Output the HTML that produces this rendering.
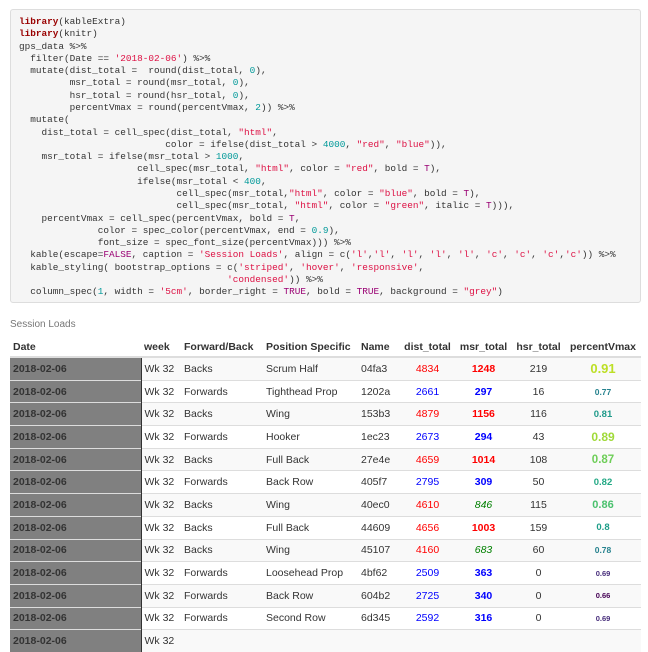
<!DOCTYPE html>
<html><head><style>
body{margin:0;background:#fff;width:648px;height:633px;overflow:hidden;font-family:"Liberation Sans",Arial,sans-serif;color:#333}
pre{position:absolute;left:10px;top:9px;width:613px;height:280px;margin:0;padding:6px 8px 6px 8px;background:#f5f5f5;border:1px solid #ddd;border-radius:3px;font-family:"Liberation Mono",monospace;font-size:9.4px;line-height:12.28px;color:#333}
.k{color:#990000;font-weight:bold}.s{color:#dd1144}.n{color:#009999}.t{color:#990073}
.cap{position:absolute;left:10px;top:319px;font-size:10px;color:#777}
table{position:absolute;left:10px;top:337px;width:631px;border-collapse:collapse;font-size:10.5px;table-layout:fixed}
th{text-align:left;font-weight:bold;height:19px;padding:0 3px;border-bottom:2px solid #ddd;color:#333}
td{height:21.7px;padding:0 3px;border-top:1px solid #ddd;white-space:nowrap}
tbody tr:nth-child(odd){background:#f9f9f9}
td.d{background:#808080;border-right:1px solid #333;font-weight:bold;color:#333}
.c{text-align:center}
.r{color:#ff0000}.b{color:#0000ff}.rb{color:#ff0000;font-weight:bold}.bb{color:#0000ff;font-weight:bold}.g{color:#008000;font-style:italic}
.p{font-weight:bold}
</style></head><body>
<pre><span class="k">library</span>(kableExtra)
<span class="k">library</span>(knitr)
gps_data %&gt;%
  filter(Date == <span class="s">'2018-02-06'</span>) %&gt;%
  mutate(dist_total =  round(dist_total, <span class="n">0</span>),
         msr_total = round(msr_total, <span class="n">0</span>),
         hsr_total = round(hsr_total, <span class="n">0</span>),
         percentVmax = round(percentVmax, <span class="n">2</span>)) %&gt;%
  mutate(
    dist_total = cell_spec(dist_total, <span class="s">"html"</span>,
                          color = ifelse(dist_total &gt; <span class="n">4000</span>, <span class="s">"red"</span>, <span class="s">"blue"</span>)),
    msr_total = ifelse(msr_total &gt; <span class="n">1000</span>,
                     cell_spec(msr_total, <span class="s">"html"</span>, color = <span class="s">"red"</span>, bold = <span class="t">T</span>),
                     ifelse(msr_total &lt; <span class="n">400</span>,
                            cell_spec(msr_total,<span class="s">"html"</span>, color = <span class="s">"blue"</span>, bold = <span class="t">T</span>),
                            cell_spec(msr_total, <span class="s">"html"</span>, color = <span class="s">"green"</span>, italic = <span class="t">T</span>))),
    percentVmax = cell_spec(percentVmax, bold = <span class="t">T</span>,
              color = spec_color(percentVmax, end = <span class="n">0.9</span>),
              font_size = spec_font_size(percentVmax))) %&gt;%
  kable(escape=<span class="t">FALSE</span>, caption = <span class="s">'Session Loads'</span>, align = c(<span class="s">'l'</span>,<span class="s">'l'</span>, <span class="s">'l'</span>, <span class="s">'l'</span>, <span class="s">'l'</span>, <span class="s">'c'</span>, <span class="s">'c'</span>, <span class="s">'c'</span>,<span class="s">'c'</span>)) %&gt;%
  kable_styling( bootstrap_options = c(<span class="s">'striped'</span>, <span class="s">'hover'</span>, <span class="s">'responsive'</span>,
                                     <span class="s">'condensed'</span>)) %&gt;%
  column_spec(<span class="n">1</span>, width = <span class="s">'5cm'</span>, border_right = <span class="t">TRUE</span>, bold = <span class="t">TRUE</span>, background = <span class="s">"grey"</span>)</pre>
<div class="cap">Session Loads</div>
<table>
<colgroup><col style="width:131px"><col style="width:40px"><col style="width:82px"><col style="width:95px"><col style="width:42px"><col style="width:55px"><col style="width:57px"><col style="width:53px"><col style="width:76px"></colgroup>
<thead><tr><th>Date</th><th>week</th><th>Forward/Back</th><th>Position Specific</th><th>Name</th><th class="c">dist_total</th><th class="c">msr_total</th><th class="c">hsr_total</th><th class="c">percentVmax</th></tr></thead>
<tbody>
<tr><td class="d">2018-02-06</td><td>Wk 32</td><td>Backs</td><td>Scrum Half</td><td>04fa3</td><td class="c r">4834</td><td class="c rb">1248</td><td class="c">219</td><td class="c p" style="color:#bddf26;font-size:13px">0.91</td></tr>
<tr><td class="d">2018-02-06</td><td>Wk 32</td><td>Forwards</td><td>Tighthead Prop</td><td>1202a</td><td class="c b">2661</td><td class="c bb">297</td><td class="c">16</td><td class="c p" style="color:#26828e;font-size:8.5px">0.77</td></tr>
<tr><td class="d">2018-02-06</td><td>Wk 32</td><td>Backs</td><td>Wing</td><td>153b3</td><td class="c r">4879</td><td class="c rb">1156</td><td class="c">116</td><td class="c p" style="color:#1f9a8a;font-size:9.5px">0.81</td></tr>
<tr><td class="d">2018-02-06</td><td>Wk 32</td><td>Forwards</td><td>Hooker</td><td>1ec23</td><td class="c b">2673</td><td class="c bb">294</td><td class="c">43</td><td class="c p" style="color:#a0da39;font-size:12px">0.89</td></tr>
<tr><td class="d">2018-02-06</td><td>Wk 32</td><td>Backs</td><td>Full Back</td><td>27e4e</td><td class="c r">4659</td><td class="c rb">1014</td><td class="c">108</td><td class="c p" style="color:#6ece58;font-size:11.5px">0.87</td></tr>
<tr><td class="d">2018-02-06</td><td>Wk 32</td><td>Forwards</td><td>Back Row</td><td>405f7</td><td class="c b">2795</td><td class="c bb">309</td><td class="c">50</td><td class="c p" style="color:#22a884;font-size:9.5px">0.82</td></tr>
<tr><td class="d">2018-02-06</td><td>Wk 32</td><td>Backs</td><td>Wing</td><td>40ec0</td><td class="c r">4610</td><td class="c g">846</td><td class="c">115</td><td class="c p" style="color:#4ac16d;font-size:11px">0.86</td></tr>
<tr><td class="d">2018-02-06</td><td>Wk 32</td><td>Backs</td><td>Full Back</td><td>44609</td><td class="c r">4656</td><td class="c rb">1003</td><td class="c">159</td><td class="c p" style="color:#1f9e89;font-size:9.5px">0.8</td></tr>
<tr><td class="d">2018-02-06</td><td>Wk 32</td><td>Backs</td><td>Wing</td><td>45107</td><td class="c r">4160</td><td class="c g">683</td><td class="c">60</td><td class="c p" style="color:#26828e;font-size:8.5px">0.78</td></tr>
<tr><td class="d">2018-02-06</td><td>Wk 32</td><td>Forwards</td><td>Loosehead Prop</td><td>4bf62</td><td class="c b">2509</td><td class="c bb">363</td><td class="c">0</td><td class="c p" style="color:#472d7b;font-size:7.5px">0.69</td></tr>
<tr><td class="d">2018-02-06</td><td>Wk 32</td><td>Forwards</td><td>Back Row</td><td>604b2</td><td class="c b">2725</td><td class="c bb">340</td><td class="c">0</td><td class="c p" style="color:#440154;font-size:7.5px">0.66</td></tr>
<tr><td class="d">2018-02-06</td><td>Wk 32</td><td>Forwards</td><td>Second Row</td><td>6d345</td><td class="c b">2592</td><td class="c bb">316</td><td class="c">0</td><td class="c p" style="color:#472d7b;font-size:7.5px">0.69</td></tr>
<tr><td class="d">2018-02-06</td><td>Wk 32</td><td></td><td></td><td></td><td></td><td></td><td></td><td></td></tr>
</tbody></table>
</body></html>
